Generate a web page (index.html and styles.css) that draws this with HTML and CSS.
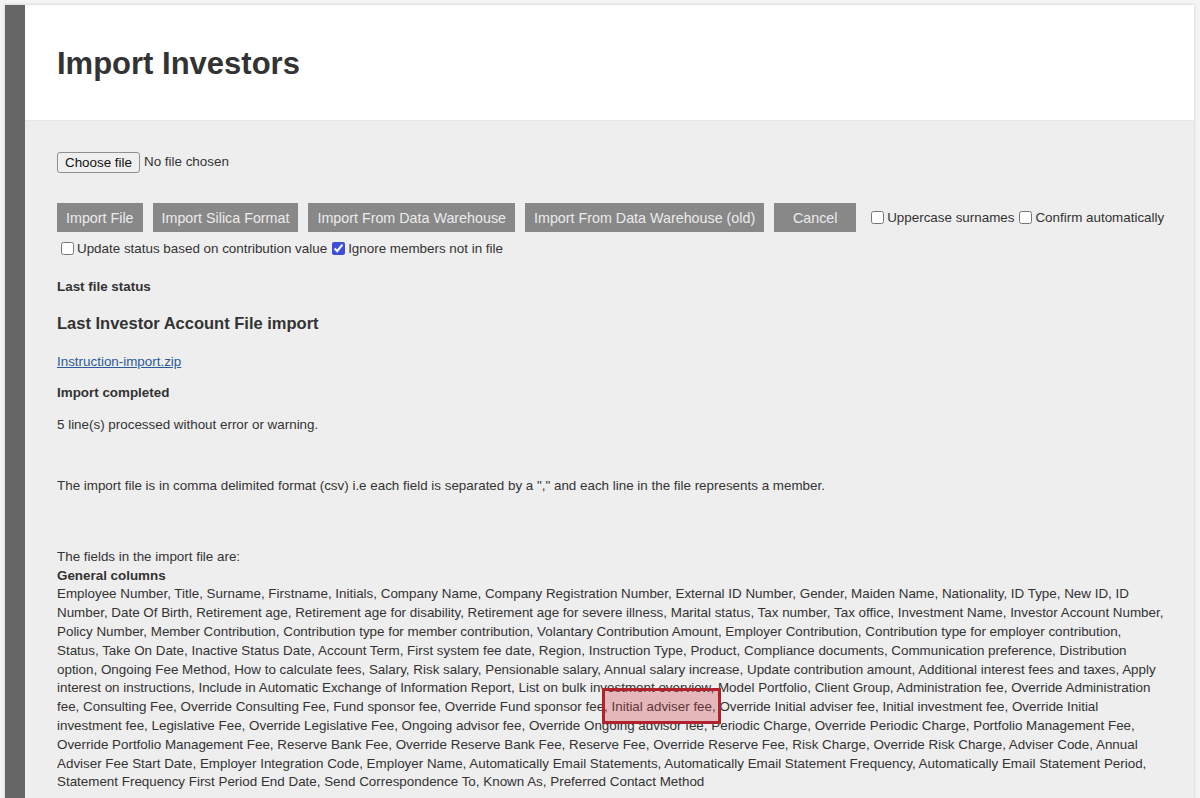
FILE: index.html
```html
<!DOCTYPE html>
<html lang="en">
<head>
<meta charset="utf-8">
<title>Import Investors</title>
<link rel="stylesheet" href="styles.css">
</head>
<body>
<div class="frame">
  <div class="sidebar"></div>
  <main class="main">
    <header class="page-header">
      <h1 class="page-title">Import Investors</h1>
    </header>
    <section class="content">
      <div class="file-row">
        <button type="button" class="file-btn">Choose file</button>
        <span class="file-name">No file chosen</span>
      </div>
      <div class="actions">
        <button type="button" class="btn">Import File</button>
        <button type="button" class="btn">Import Silica Format</button>
        <button type="button" class="btn">Import From Data Warehouse</button>
        <button type="button" class="btn">Import From Data Warehouse (old)</button>
        <button type="button" class="btn btn-cancel">Cancel</button>
        <label class="check check-first"><input type="checkbox">Uppercase surnames</label>
        <label class="check"><input type="checkbox">Confirm automatically</label>
        <label class="check"><input type="checkbox">Update status based on contribution value</label>
        <label class="check"><input type="checkbox" checked>Ignore members not in file</label>
      </div>
      <p class="status-label">Last file status</p>
      <h3 class="status-title">Last Investor Account File import</h3>
      <p class="status-link"><a href="#">Instruction-import.zip</a></p>
      <p class="status-label status-done">Import completed</p>
      <p class="status-text">5 line(s) processed without error or warning.</p>
      <p class="info">The import file is in comma delimited format (csv) i.e each field is separated by a "," and each line in the file represents a member.</p>
      <div class="fields">
        <div>The fields in the import file are:</div>
        <div class="fields-head">General columns</div>
        <div class="fields-list">Employee Number, Title, Surname, Firstname, Initials, Company Name, Company Registration Number, External ID Number, Gender, Maiden Name, Nationality, ID Type, New ID, ID Number, Date Of Birth, Retirement age, Retirement age for disability, Retirement age for severe illness, Marital status, Tax number, Tax office, Investment Name, Investor Account Number, Policy Number, Member Contribution, Contribution type for member contribution, Volantary Contribution Amount, Employer Contribution, Contribution type for employer contribution, Status, Take On Date, Inactive Status Date, Account Term, First system fee date, Region, Instruction Type, Product, Compliance documents, Communication preference, Distribution option, Ongoing Fee Method, How to calculate fees, Salary, Risk salary, Pensionable salary, Annual salary increase, Update contribution amount, Additional interest fees and taxes, Apply interest on instructions, Include in Automatic Exchange of Information Report, List on bulk investment overview, Model Portfolio, Client Group, Administration fee, Override Administration fee, Consulting Fee, Override Consulting Fee, Fund sponsor fee, Override Fund sponsor fee<span class="mark">, Initial adviser fee,</span> Override Initial adviser fee, Initial investment fee, Override Initial investment fee, Legislative Fee, Override Legislative Fee, Ongoing advisor fee, Override Ongoing advisor fee, Periodic Charge, Override Periodic Charge, Portfolio Management Fee, Override Portfolio Management Fee, Reserve Bank Fee, Override Reserve Bank Fee, Reserve Fee, Override Reserve Fee, Risk Charge, Override Risk Charge, Adviser Code, Annual Adviser Fee Start Date, Employer Integration Code, Employer Name, Automatically Email Statements, Automatically Email Statement Frequency, Automatically Email Statement Period, Statement Frequency First Period End Date, Send Correspondence To, Known As, Preferred Contact Method</div>
      </div>
    </section>
  </main>
</div>
</body>
</html>
```
FILE: styles.css
```css
html, body {
  margin: 0;
  padding: 0;
}
body {
  background: #f4f4f4;
  font-family: "Liberation Sans", Arial, sans-serif;
  font-size: 13.4px;
  line-height: 18.8px;
  color: #333333;
  overflow: hidden;
}
.frame {
  display: flex;
  margin: 5px 6px 0 5px;
  min-height: 793px;
  box-shadow: 0 0 3px rgba(0, 0, 0, 0.18);
}
.sidebar {
  width: 20px;
  flex: 0 0 20px;
  background: #666666;
}
.main {
  flex: 1;
  display: flex;
  flex-direction: column;
  background: #eeeeee;
}
.page-header {
  background: #ffffff;
  height: 116px;
  display: flex;
  align-items: center;
  padding: 2px 32px 0;
  border-bottom: 1px solid #e8e8e8;
  box-sizing: border-box;
}
.page-title {
  margin: 0;
  font-size: 31px;
  line-height: 38px;
  font-weight: bold;
  color: #333333;
}
.content {
  padding: 31px 28px 0 32px;
}
.file-row {
  display: flex;
  align-items: center;
  height: 21px;
}
.file-btn {
  font-family: inherit;
  font-size: 13.4px;
  color: #111111;
  background: #efefef;
  border: 1px solid #8f8f8f;
  border-radius: 3px;
  height: 21px;
  padding: 0 7px;
  line-height: 17px;
  white-space: nowrap;
}
.file-name {
  margin-left: 4px;
  color: #333333;
}
.actions {
  display: flex;
  flex-wrap: wrap;
  align-items: center;
  row-gap: 6px;
  margin-top: 30px;
}
.btn {
  font-family: inherit;
  font-size: 14.3px;
  height: 29px;
  padding: 0 9px;
  margin-right: 10px;
  background: #888888;
  color: #ebebeb;
  border: none;
  border-radius: 0;
  white-space: nowrap;
}
.btn-cancel {
  min-width: 82px;
}
.check {
  display: inline-flex;
  align-items: center;
  margin-right: 1px;
  padding-top: 2px;
  white-space: nowrap;
}
.check input {
  margin: 0 3px 2px 4px;
  width: 13px;
  height: 13px;
  accent-color: #3d4fd8;
}
.check-first {
  margin-left: 1px;
}
.status-label {
  margin: 19px 0 0;
  font-weight: bold;
}
.status-title {
  margin: 16px 0 0;
  font-size: 16.5px;
  line-height: 20px;
  font-weight: bold;
}
.status-link {
  margin: 20px 0 0;
}
.status-link a {
  color: #2c5a99;
  text-decoration: underline;
}
.status-done {
  margin-top: 13px;
}
.status-text {
  margin: 13px 0 0;
}
.info {
  margin: 42px 0 0;
}
.fields {
  margin-top: 52px;
  padding-bottom: 20px;
}
.fields-head {
  font-weight: bold;
}
.mark {
  position: relative;
}
.mark::after {
  content: "";
  position: absolute;
  left: -2px;
  right: -5px;
  top: -11px;
  bottom: -10px;
  border: 3px solid #b0222c;
  background: rgba(205, 60, 70, 0.3);
}
```
